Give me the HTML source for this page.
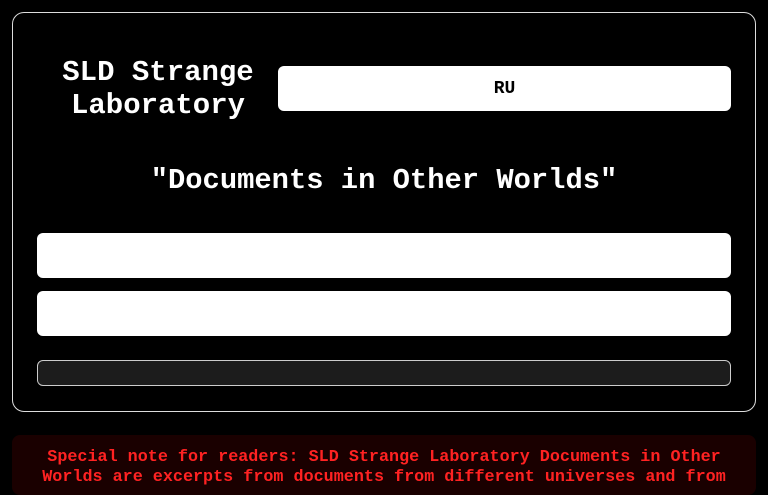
<!DOCTYPE html>
<html><head><style>
body{margin:0;background:#000;width:768px;height:480px;overflow:hidden;font-family:"Liberation Mono",monospace;font-weight:bold}
.c{position:absolute;left:12px;top:12px;width:742px;height:398px;border:1px solid #ddd;border-radius:12px}
.t{position:absolute;left:40px;top:56px;width:236px;text-align:center;color:#fff;font-size:29px;line-height:33px}
.b{position:absolute;background:#fff;border-radius:6px}
.ru{left:278px;top:66px;width:453px;height:45px;text-align:center;line-height:47px;font-size:18px;color:#000}
h1{position:absolute;left:0;top:163px;width:768px;margin:0;text-align:center;color:#fff;font-size:28.8px;line-height:36px}
.g{position:absolute;left:37px;top:360px;width:692px;height:24px;border:1px solid #ccc;border-radius:6px;background:#1c1c1c}
.n{position:absolute;left:12px;top:435px;width:744px;height:60px;background:#1a0000;border-radius:8px;color:#ff2222;font-size:16.75px;line-height:20px;text-align:center;padding-top:13px;box-sizing:border-box}
</style></head><body>
<div class="c"></div>
<div class="t">SLD Strange Laboratory</div>
<div class="b ru">RU</div>
<h1>"Documents in Other Worlds"</h1>
<div class="b" style="left:37px;top:233px;width:694px;height:45px"></div>
<div class="b" style="left:37px;top:291px;width:694px;height:45px"></div>
<div class="g"></div>
<div class="n">Special note for readers: SLD Strange Laboratory Documents in Other<br>Worlds are excerpts from documents from different universes and from</div>
</body></html>
